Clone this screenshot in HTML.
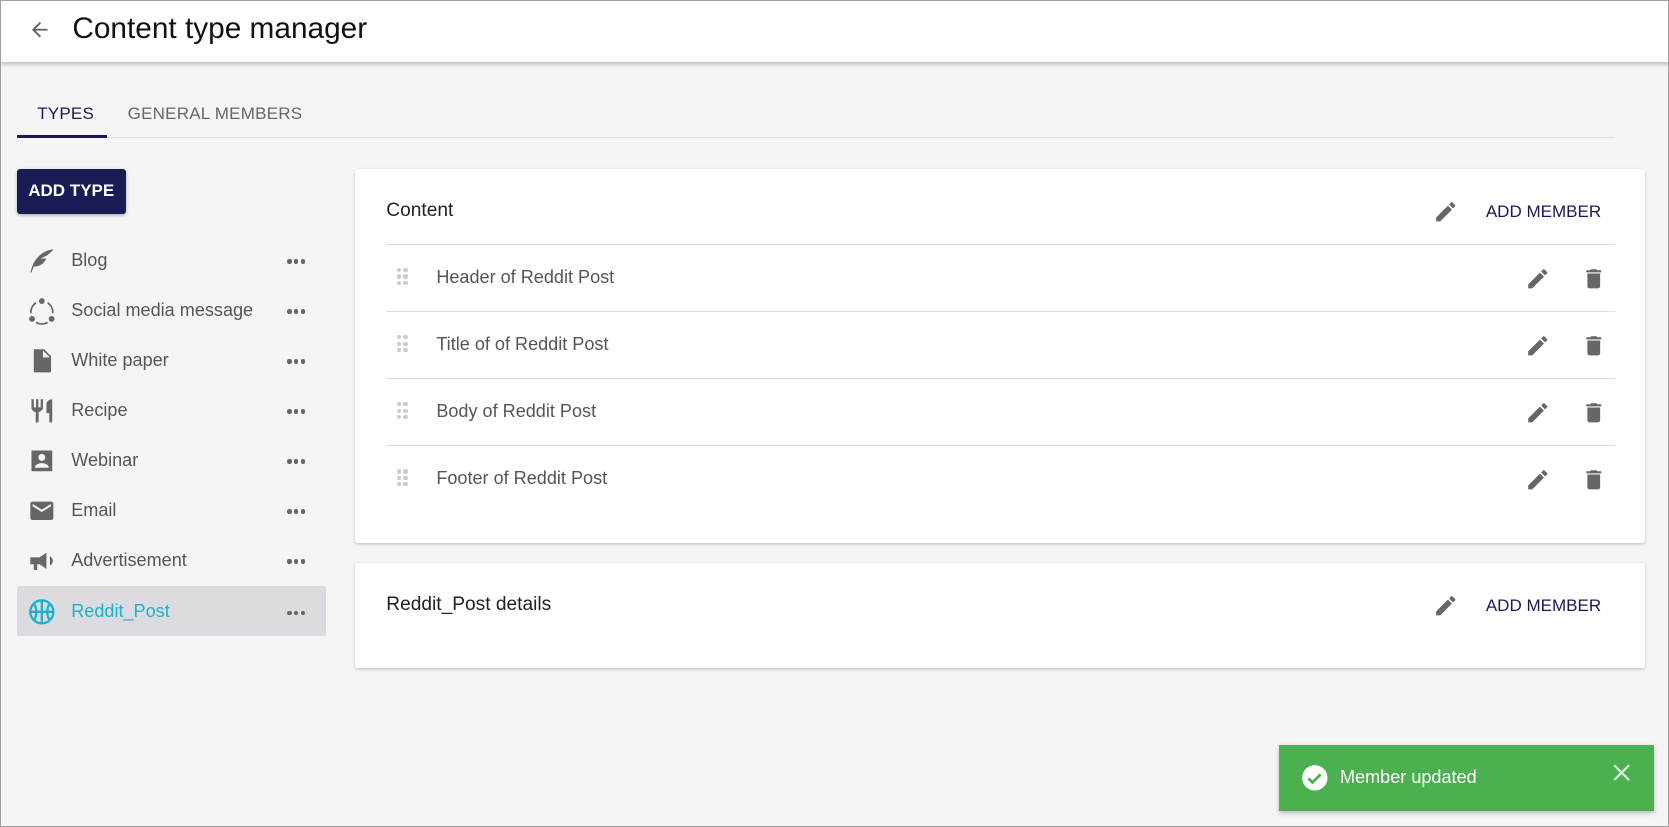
<!DOCTYPE html>
<html><head><style>
*{box-sizing:border-box;margin:0;padding:0}
html,body{width:1669px;height:827px;overflow:hidden;background:#f5f5f5}
#w{zoom:1.0644;width:1568px;height:777px;position:relative;font-family:"Liberation Sans","DejaVu Sans",sans-serif;border:1px solid #a0a0a0;color:#555;background:#f5f5f5;overflow:hidden}
.hdr{position:absolute;left:0;top:0;width:1568px;height:57px;background:#fff;box-shadow:0 2px 4px rgba(0,0,0,.25)}
.hdr h1{position:absolute;left:67px;top:10px;font-size:28px;font-weight:normal;color:#111}
.abs{position:absolute}
.tab{position:absolute;top:97px;font-size:16px;letter-spacing:.2px}
.btn{position:absolute;left:15px;top:158px;width:102px;height:42px;background:#1a1a55;color:#fff;font-weight:bold;font-size:16px;border-radius:3px;text-align:center;line-height:42px;box-shadow:0 1px 3px rgba(0,0,0,.3)}
.item{position:absolute;left:15px;width:290px;height:47px;font-size:17px;color:#555}
.item span{position:absolute;left:51px;top:0;line-height:47px}
.item svg{position:absolute;left:10px;top:11px}
.dots{position:absolute;left:254px;top:21px;line-height:0}
.dots i{display:inline-block;width:4px;height:4px;border-radius:2px;background:#666;margin-right:2.5px}
.card{position:absolute;left:333px;width:1212px;background:#fff;border-radius:3px;box-shadow:0 1px 3px rgba(0,0,0,.2)}
.ct{position:absolute;left:29px;font-size:18px;color:#222}
.am{position:absolute;left:1062px;font-size:16px;color:#1a1a55}
.row{position:absolute;left:29px;width:1154px;height:63px;border-top:1px solid #ddd}
.row span{position:absolute;left:47px;top:21px;font-size:17px;color:#555}
.grip{position:absolute;left:10px;top:22px}
.grip i{position:absolute;width:4px;height:4px;border-radius:2px;background:#ccc}
</style></head><body><div id="w">
<div class="hdr">
<svg class="abs" style="left:25px;top:16px" width="22" height="22" viewBox="0 0 24 24"><path d="M20 11H7.8l5.6-5.6L12 4l-8 8 8 8 1.4-1.4L7.8 13H20z" fill="#666"/></svg>
<h1>Content type manager</h1></div>
<div class="tab" style="left:34px;color:#1a1a55">TYPES</div>
<div class="tab" style="left:119px;color:#666">GENERAL MEMBERS</div>
<div class="abs" style="left:15px;top:128px;width:1501px;height:1px;background:#ddd"></div>
<div class="abs" style="left:15px;top:126px;width:85px;height:3px;background:#1a1a55"></div>
<div class="btn">ADD TYPE</div>

<div class="item" style="top:220px"><svg width="26" height="26" viewBox="0 0 24 24"><path d="M22 2C13 3 7 9 4 16l-2 6h1l2-5c6 0 9-3 11-7h-5l6-3c2-2 4-3 5-5z" fill="#666"/></svg><span>Blog</span><div class="dots"><i></i><i></i><i></i></div></div>
<div class="item" style="top:267px"><svg width="26" height="26" viewBox="0 0 24 24" fill="#666"><circle cx="12" cy="3.5" r="2.5"/><circle cx="3.5" cy="19" r="2.5"/><circle cx="20.5" cy="19" r="2.5"/><path d="M7 5a10 10 0 0 0-4.5 9M17 5a10 10 0 0 1 4.5 9M7 22a10 10 0 0 0 10 0" stroke="#666" stroke-width="1.5" fill="none"/></svg><span>Social media message</span><div class="dots"><i></i><i></i><i></i></div></div>
<div class="item" style="top:314px"><svg width="26" height="26" viewBox="0 0 24 24"><path d="M6 2h8l6 6v13a1 1 0 0 1-1 1H6a1 1 0 0 1-1-1V3a1 1 0 0 1 1-1zm7 1v6h6z" fill="#666"/></svg><span>White paper</span><div class="dots"><i></i><i></i><i></i></div></div>
<div class="item" style="top:361px"><svg width="26" height="26" viewBox="0 0 24 24"><path d="M11 9H9V2H7v7H5V2H3v7c0 2 1.6 3.8 3.7 4V22h2.5v-9c2-.3 3.8-2 3.8-4V2h-2zm5-3v8h2.5v8H21V2c-2.8 0-5 2.2-5 4z" fill="#666"/></svg><span>Recipe</span><div class="dots"><i></i><i></i><i></i></div></div>
<div class="item" style="top:408px"><svg width="26" height="26" viewBox="0 0 24 24"><path d="M3 3h18v18H3zm9 3a3 3 0 1 0 0 6 3 3 0 0 0 0-6zm-6 12h12c0-3-4-4-6-4s-6 1-6 4z" fill="#666" fill-rule="evenodd"/></svg><span>Webinar</span><div class="dots"><i></i><i></i><i></i></div></div>
<div class="item" style="top:455px"><svg width="26" height="26" viewBox="0 0 24 24"><path d="M20 4H4a2 2 0 0 0-2 2v12a2 2 0 0 0 2 2h16a2 2 0 0 0 2-2V6a2 2 0 0 0-2-2zm0 4-8 5-8-5V6l8 5 8-5z" fill="#666"/></svg><span>Email</span><div class="dots"><i></i><i></i><i></i></div></div>
<div class="item" style="top:502px"><svg width="26" height="26" viewBox="0 0 24 24"><path d="M2 9v6h3v5h3v-5h2l6 4V5l-6 4zm17-1v8c1.5-.7 2.5-2.3 2.5-4S20.5 8.7 19 8z" fill="#666"/></svg><span>Advertisement</span><div class="dots"><i></i><i></i><i></i></div></div>
<div class="item" style="top:550px;background:#dcdce0;border-radius:2px"><svg width="26" height="26" viewBox="0 0 24 24" fill="none" stroke="#1ab3c9" stroke-width="2"><circle cx="12" cy="12" r="10"/><path d="M12 2v20M2 12h20M5 5c3 3 3 11 0 14M19 5c-3 3-3 11 0 14"/></svg><span style="color:#1ab3c9">Reddit_Post</span><div class="dots"><i></i><i></i><i></i></div></div>

<div class="card" style="top:158px;height:351px">
<div class="ct" style="top:29px">Content</div>
<svg class="abs" style="left:1012px;top:28px" width="24" height="24" viewBox="0 0 24 24"><path d="M3 17.25V21h3.75L17.8 9.94l-3.75-3.75zM20.7 7.04a1 1 0 0 0 0-1.41l-2.34-2.34a1 1 0 0 0-1.41 0l-1.83 1.83 3.75 3.75z" fill="#666"/></svg>
<div class="am" style="top:31px">ADD MEMBER</div>
<div class="row" style="top:70px"><div class="grip"><i style="left:0;top:0"></i><i style="left:6px;top:0"></i><i style="left:0;top:6px"></i><i style="left:6px;top:6px"></i><i style="left:0;top:12px"></i><i style="left:6px;top:12px"></i></div><span>Header of Reddit Post</span>
<svg class="abs" style="left:1070px;top:20px" width="24" height="24" viewBox="0 0 24 24"><path d="M3 17.25V21h3.75L17.8 9.94l-3.75-3.75zM20.7 7.04a1 1 0 0 0 0-1.41l-2.34-2.34a1 1 0 0 0-1.41 0l-1.83 1.83 3.75 3.75z" fill="#666"/></svg>
<svg class="abs" style="left:1122px;top:20px" width="24" height="24" viewBox="0 0 24 24"><path d="M6 19a2 2 0 0 0 2 2h8a2 2 0 0 0 2-2V7H6zM19 4h-3.5l-1-1h-5l-1 1H5v2h14z" fill="#666"/></svg></div>
<div class="row" style="top:133px"><div class="grip"><i style="left:0;top:0"></i><i style="left:6px;top:0"></i><i style="left:0;top:6px"></i><i style="left:6px;top:6px"></i><i style="left:0;top:12px"></i><i style="left:6px;top:12px"></i></div><span>Title of of Reddit Post</span>
<svg class="abs" style="left:1070px;top:20px" width="24" height="24" viewBox="0 0 24 24"><path d="M3 17.25V21h3.75L17.8 9.94l-3.75-3.75zM20.7 7.04a1 1 0 0 0 0-1.41l-2.34-2.34a1 1 0 0 0-1.41 0l-1.83 1.83 3.75 3.75z" fill="#666"/></svg>
<svg class="abs" style="left:1122px;top:20px" width="24" height="24" viewBox="0 0 24 24"><path d="M6 19a2 2 0 0 0 2 2h8a2 2 0 0 0 2-2V7H6zM19 4h-3.5l-1-1h-5l-1 1H5v2h14z" fill="#666"/></svg></div>
<div class="row" style="top:196px"><div class="grip"><i style="left:0;top:0"></i><i style="left:6px;top:0"></i><i style="left:0;top:6px"></i><i style="left:6px;top:6px"></i><i style="left:0;top:12px"></i><i style="left:6px;top:12px"></i></div><span>Body of Reddit Post</span>
<svg class="abs" style="left:1070px;top:20px" width="24" height="24" viewBox="0 0 24 24"><path d="M3 17.25V21h3.75L17.8 9.94l-3.75-3.75zM20.7 7.04a1 1 0 0 0 0-1.41l-2.34-2.34a1 1 0 0 0-1.41 0l-1.83 1.83 3.75 3.75z" fill="#666"/></svg>
<svg class="abs" style="left:1122px;top:20px" width="24" height="24" viewBox="0 0 24 24"><path d="M6 19a2 2 0 0 0 2 2h8a2 2 0 0 0 2-2V7H6zM19 4h-3.5l-1-1h-5l-1 1H5v2h14z" fill="#666"/></svg></div>
<div class="row" style="top:259px"><div class="grip"><i style="left:0;top:0"></i><i style="left:6px;top:0"></i><i style="left:0;top:6px"></i><i style="left:6px;top:6px"></i><i style="left:0;top:12px"></i><i style="left:6px;top:12px"></i></div><span>Footer of Reddit Post</span>
<svg class="abs" style="left:1070px;top:20px" width="24" height="24" viewBox="0 0 24 24"><path d="M3 17.25V21h3.75L17.8 9.94l-3.75-3.75zM20.7 7.04a1 1 0 0 0 0-1.41l-2.34-2.34a1 1 0 0 0-1.41 0l-1.83 1.83 3.75 3.75z" fill="#666"/></svg>
<svg class="abs" style="left:1122px;top:20px" width="24" height="24" viewBox="0 0 24 24"><path d="M6 19a2 2 0 0 0 2 2h8a2 2 0 0 0 2-2V7H6zM19 4h-3.5l-1-1h-5l-1 1H5v2h14z" fill="#666"/></svg></div>
</div>

<div class="card" style="top:528px;height:99px">
<div class="ct" style="top:29px">Reddit_Post details</div>
<svg class="abs" style="left:1012px;top:28px" width="24" height="24" viewBox="0 0 24 24"><path d="M3 17.25V21h3.75L17.8 9.94l-3.75-3.75zM20.7 7.04a1 1 0 0 0 0-1.41l-2.34-2.34a1 1 0 0 0-1.41 0l-1.83 1.83 3.75 3.75z" fill="#666"/></svg>
<div class="am" style="top:31px">ADD MEMBER</div>
</div>

<div class="abs" style="left:1201px;top:699px;width:352px;height:62px;background:#4caf50;box-shadow:0 2px 4px rgba(0,0,0,.25)">
<svg class="abs" style="left:20px;top:18px" width="26" height="26" viewBox="0 0 24 24"><circle cx="12" cy="12" r="11" fill="#fff"/><path d="M6.5 12.5l3.5 3.5 7-7" stroke="#4caf50" stroke-width="2.4" fill="none"/></svg>
<div class="abs" style="left:57px;top:21px;color:#fff;font-size:17px">Member updated</div>
<svg class="abs" style="left:312px;top:16px" width="20" height="20" viewBox="0 0 20 20"><path d="M3 3l14 14M17 3L3 17" stroke="#d8f0d8" stroke-width="2.2"/></svg>
</div>
</div></body></html>
